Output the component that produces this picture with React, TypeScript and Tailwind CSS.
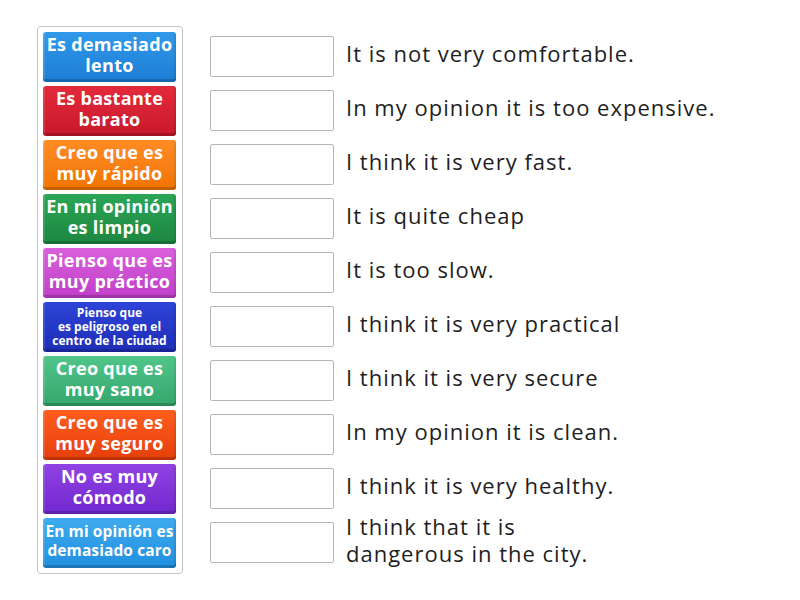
import React from "react";

const tiles: { text: React.ReactNode; cls: string; size: string }[] = [
  { text: <>Es demasiado<br />lento</>, cls: "bg-gradient-to-b from-[#3199ea] to-[#1b7dd4]", size: "big" },
  { text: <>Es bastante<br />barato</>, cls: "bg-gradient-to-b from-[#e32a3c] to-[#c8182b]", size: "big" },
  { text: <>Creo que es<br />muy rápido</>, cls: "bg-gradient-to-b from-[#ff8c24] to-[#f07400]", size: "big" },
  { text: <>En mi opinión<br />es limpio</>, cls: "bg-gradient-to-b from-[#2ba655] to-[#1c8640]", size: "big" },
  { text: <>Pienso que es<br />muy práctico</>, cls: "bg-gradient-to-b from-[#d95fdc] to-[#c03ec9]", size: "big" },
  { text: <>Pienso que<br />es peligroso en el<br />centro de la ciudad</>, cls: "bg-gradient-to-b from-[#2e44d8] to-[#1e2db5]", size: "small" },
  { text: <>Creo que es<br />muy sano</>, cls: "bg-gradient-to-b from-[#50c68b] to-[#33a66c]", size: "big" },
  { text: <>Creo que es<br />muy seguro</>, cls: "bg-gradient-to-b from-[#ff5d1e] to-[#e63f0a]", size: "big" },
  { text: <>No es muy<br />cómodo</>, cls: "bg-gradient-to-b from-[#9142e3] to-[#7127cf]", size: "big" },
  { text: <>En mi opinión es<br />demasiado caro</>, cls: "bg-gradient-to-b from-[#3eaaee] to-[#1f8fe0]", size: "mid" },
];

const answers: React.ReactNode[] = [
  "It is not very comfortable.",
  "In my opinion it is too expensive.",
  "I think it is very fast.",
  "It is quite cheap",
  "It is too slow.",
  "I think it is very practical",
  "I think it is very secure",
  "In my opinion it is clean.",
  "I think it is very healthy.",
  <>I think that it is<br />dangerous in the city.</>,
];

export default function App() {
  return (
    <div
      className="w-[800px] h-[600px] bg-white flex items-start pl-[37px] pt-[26px]"
      style={{ fontFamily: '"Open Sans", "Noto Sans", sans-serif' }}
    >
      <div className="flex flex-col gap-[4px] border border-[#c4c4c4] rounded-[4px] pl-[5px] pr-[6px] py-[5px] w-[146px]">
        {tiles.map((t, i) => (
          <div
            key={i}
            className={`${t.cls} h-[50px] w-[133px] rounded-[3px] flex items-center justify-center text-center text-white font-bold shadow-[inset_0_-3px_0_rgba(0,0,0,0.18),inset_2px_0_0_rgba(255,255,255,0.12),inset_-2px_0_0_rgba(0,0,0,0.08)] ${
              t.size === "small"
                ? "text-[12px] leading-[14px] pb-[1px]"
                : t.size === "mid"
                ? "text-[15.5px] leading-[19px] tracking-[0.1px] pb-[4px]"
                : "text-[18px] leading-[21px] tracking-[0.3px] pb-[4px]"
            }`}
          >
            <span className="whitespace-nowrap">{t.text}</span>
          </div>
        ))}
      </div>
      <div className="flex flex-col gap-[13px] ml-[27px] mt-[10px]">
        {answers.map((a, i) => (
          <div key={i} className="flex items-center h-[41px]">
            <div className="w-[124px] h-[41px] border border-[#b5b5b5] rounded-[2px] bg-white shrink-0" />
            <div className="ml-[12px] pb-[6px] text-[22px] leading-[27px] tracking-[1px] text-[#1e1e1e] whitespace-nowrap">
              {a}
            </div>
          </div>
        ))}
      </div>
    </div>
  );
}
